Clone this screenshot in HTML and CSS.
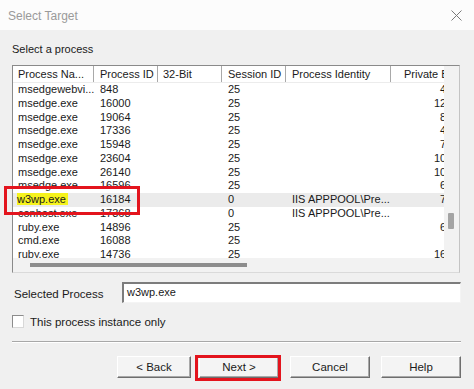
FILE: index.html
```html
<!DOCTYPE html>
<html lang="en">
<head>
    <meta charset="UTF-8">
    <meta name="viewport" content="width=device-width, initial-scale=1.0">
    <title>Select Target</title>
    <link rel="stylesheet" href="styles.css">
</head>
<body>
<div class="window">
    <!-- Title bar -->
    <div class="titlebar">
        <span class="title">Select Target</span>
        <svg class="close" width="11" height="11" viewBox="0 0 11 11">
            <path d="M0.5 0.5 L10.5 10.5 M10.5 0.5 L0.5 10.5" stroke="#7a7a7a" stroke-width="1" fill="none"/>
        </svg>
    </div>

    <div class="content">
        <div class="caption">Select a process</div>

        <!-- Process list -->
        <div class="listbox">
            <div class="list-top">
                <div class="list-view">
                    <div class="list-head">
                        <div class="col c-name">Process Na...</div>
                        <div class="col c-pid">Process ID</div>
                        <div class="col c-bit">32-Bit</div>
                        <div class="col c-sess">Session ID</div>
                        <div class="col c-ident">Process Identity</div>
                        <div class="col c-priv">Private Bytes</div>
                    </div>
                    <div class="list-rows">
                        <div class="row"><div class="col c-name">msedgewebvi...</div><div class="col c-pid">848</div><div class="col c-bit"></div><div class="col c-sess">25</div><div class="col c-ident"></div><div class="col c-priv">4,912 K</div></div>
                        <div class="row"><div class="col c-name">msedge.exe</div><div class="col c-pid">16000</div><div class="col c-bit"></div><div class="col c-sess">25</div><div class="col c-ident"></div><div class="col c-priv">12,488 K</div></div>
                        <div class="row"><div class="col c-name">msedge.exe</div><div class="col c-pid">19064</div><div class="col c-bit"></div><div class="col c-sess">25</div><div class="col c-ident"></div><div class="col c-priv">8,204 K</div></div>
                        <div class="row"><div class="col c-name">msedge.exe</div><div class="col c-pid">17336</div><div class="col c-bit"></div><div class="col c-sess">25</div><div class="col c-ident"></div><div class="col c-priv">4,356 K</div></div>
                        <div class="row"><div class="col c-name">msedge.exe</div><div class="col c-pid">15948</div><div class="col c-bit"></div><div class="col c-sess">25</div><div class="col c-ident"></div><div class="col c-priv">7,120 K</div></div>
                        <div class="row"><div class="col c-name">msedge.exe</div><div class="col c-pid">23604</div><div class="col c-bit"></div><div class="col c-sess">25</div><div class="col c-ident"></div><div class="col c-priv">10,844 K</div></div>
                        <div class="row"><div class="col c-name">msedge.exe</div><div class="col c-pid">26140</div><div class="col c-bit"></div><div class="col c-sess">25</div><div class="col c-ident"></div><div class="col c-priv">10,032 K</div></div>
                        <div class="row"><div class="col c-name">msedge.exe</div><div class="col c-pid">16596</div><div class="col c-bit"></div><div class="col c-sess">25</div><div class="col c-ident"></div><div class="col c-priv">6,548 K</div></div>
                        <div class="row selected"><div class="col c-name"><span class="hl">w3wp.exe</span></div><div class="col c-pid">16184</div><div class="col c-bit"></div><div class="col c-sess">0</div><div class="col c-ident">IIS APPPOOL\Pre...</div><div class="col c-priv">7,716 K</div></div>
                        <div class="row"><div class="col c-name">conhost.exe</div><div class="col c-pid">17368</div><div class="col c-bit"></div><div class="col c-sess">0</div><div class="col c-ident">IIS APPPOOL\Pre...</div><div class="col c-priv">964 K</div></div>
                        <div class="row"><div class="col c-name">ruby.exe</div><div class="col c-pid">14896</div><div class="col c-bit"></div><div class="col c-sess">25</div><div class="col c-ident"></div><div class="col c-priv">6,280 K</div></div>
                        <div class="row"><div class="col c-name">cmd.exe</div><div class="col c-pid">16088</div><div class="col c-bit"></div><div class="col c-sess">25</div><div class="col c-ident"></div><div class="col c-priv">948 K</div></div>
                        <div class="row"><div class="col c-name">ruby.exe</div><div class="col c-pid">14736</div><div class="col c-bit"></div><div class="col c-sess">25</div><div class="col c-ident"></div><div class="col c-priv">16,392 K</div></div>
                    </div>
                </div>
                <div class="vscroll"><div class="vthumb"></div></div>
            </div>
            <div class="hscroll"><div class="htrack"><div class="hthumb"></div></div><div class="corner"></div></div>
        </div>

        <!-- Selected process -->
        <div class="field-row">
            <label class="field-label" for="selected">Selected Process</label>
            <div class="textbox" id="selected">w3wp.exe</div>
        </div>

        <div class="check-row">
            <span class="checkbox"></span>
            <span class="check-label">This process instance only</span>
        </div>

        <div class="separator"></div>

        <div class="buttons">
            <button class="btn btn-back" type="button">&lt; Back</button>
            <button class="btn" type="button">Next &gt;</button>
            <button class="btn" type="button">Cancel</button>
            <button class="btn" type="button">Help</button>
        </div>
    </div>

    <!-- red annotation boxes -->
    <div class="mark mark-row"></div>
    <div class="mark mark-next"></div>
</div>
</body>
</html>
```

FILE: styles.css
```css
* {
    box-sizing: border-box;
}
body {
    margin: 0;
    font-family: "Liberation Sans", Arial, sans-serif;
    font-size: 11px;
    color: #1a1a1a;
    background: #f0f0f0;
}
.window {
    position: relative;
    width: 474px;
    height: 389px;
    background: #f0f0f0;
    overflow: hidden;
}
.titlebar {
    height: 30px;
    background: #fcfcfc;
    display: flex;
    align-items: center;
    justify-content: space-between;
    padding: 0 12px 0 8px;
}
.title {
    font-size: 12px;
    color: #9a9a9a;
    padding-top: 2px;
}
.close {
    display: block;
    margin-top: 1px;
}
.content {
    padding: 13px 13px 0 12px;
}
.caption {
    height: 13px;
    line-height: 13px;
    margin-bottom: 9px;
}

/* list */
.listbox {
    width: 448px;
    background: #fff;
    border-top: 1px solid #8a8a8a;
    border-left: 1px solid #8a8a8a;
    border-right: 1px solid #c4c4c4;
    border-bottom: 1px solid #dadada;
}
.list-top {
    display: flex;
    height: 192px;
}
.list-view {
    width: 431px;
    overflow: hidden;
}
.list-head,
.row {
    display: flex;
    width: 467px;
    white-space: nowrap;
}
.list-head {
    height: 17px;
    line-height: 16px;
    border-bottom: 1px solid #ececec;
}
.list-head .col {
    border-right: 1px solid #a9a9a9;
}
.list-rows {
    height: 175px;
    overflow: hidden;
}
.row {
    height: 13.75px;
    line-height: 13.75px;
}
.row.selected {
    background: #ebebeb;
}
.col {
    flex: none;
    overflow: hidden;
    padding-left: 5px;
}
.c-name { width: 81px; }
.c-pid { width: 64px; padding-left: 6px; }
.c-bit { width: 64px; }
.c-sess { width: 64px; padding-left: 6px; }
.c-ident { width: 105px; padding-left: 6px; }
.c-priv { width: 89px; text-align: right; padding-right: 2px; }
.list-head .c-priv { text-align: left; padding-left: 13px; border-right: none; }
.hl {
    background: #f6f31c;
    padding: 1px 2px 0 0;
    margin-left: -1px;
}
.vscroll {
    width: 15px;
    background: #f2f2f2;
}
.vthumb {
    margin: 147px 0 0 4px;
    width: 6px;
    height: 16px;
    background: #a4a4a4;
    border-radius: 1px;
}
.hscroll {
    display: flex;
    height: 14px;
}
.htrack {
    width: 431px;
    background: #f2f2f2;
}
.hthumb {
    margin: 5px 0 0 17px;
    width: 217px;
    height: 4px;
    background: #8d8d8d;
}
.corner {
    width: 15px;
    background: #f2f2f2;
}

/* fields */
.field-row {
    display: flex;
    align-items: center;
    margin-top: 9px;
}
.field-label {
    width: 110px;
    padding-left: 2px;
    padding-top: 2px;
    font-size: 11.5px;
}
.textbox {
    flex: 1;
    height: 21px;
    background: #fff;
    padding: 2px 3px;
    line-height: 13px;
    border-top: 2px solid #7c7c7c;
    border-left: 2px solid #7c7c7c;
    border-right: 1px solid #f4f4f4;
    border-bottom: 1px solid #f4f4f4;
}
.check-row {
    display: flex;
    align-items: center;
    margin-top: 12px;
    height: 13px;
}
.checkbox {
    width: 12px;
    height: 13px;
    background: #fff;
    border-top: 1px solid #8c8c8c;
    border-left: 1px solid #8c8c8c;
    border-right: 1px solid #d8d8d8;
    border-bottom: 1px solid #d8d8d8;
    margin-right: 6px;
}
.check-label {
    font-size: 11.5px;
}
.separator {
    margin-top: 13px;
    height: 2px;
    border-top: 1px solid #a8a8a8;
    border-bottom: 1px solid #ffffff;
}

/* buttons */
.buttons {
    display: flex;
    justify-content: flex-end;
    gap: 11px;
    margin-top: 13px;
    padding-right: 0;
}
.btn {
    width: 80px;
    height: 22px;
    font-family: "Liberation Sans", Arial, sans-serif;
    font-size: 11.5px;
    color: #1a1a1a;
    background: #f4f4f4;
    border-top: 1px solid #ffffff;
    border-left: 1px solid #ffffff;
    border-right: 1px solid #6e6e6e;
    border-bottom: 1px solid #6e6e6e;
    box-shadow: inset -1px -1px 0 #a8a8a8;
    padding: 0;
}
.btn-back {
    width: 74px;
    margin-right: -3px;
}

/* red annotation boxes */
.mark {
    position: absolute;
    border: 3px solid #e3141d;
}
.mark-row {
    left: 4px;
    top: 186px;
    width: 136px;
    height: 29px;
}
.mark-next {
    left: 195px;
    top: 355px;
    width: 86px;
    height: 26px;
}
```
